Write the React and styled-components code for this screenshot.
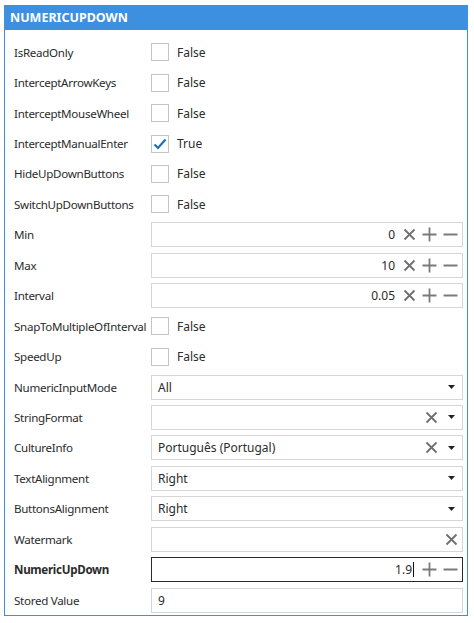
import React from 'react'
import styled, { createGlobalStyle } from 'styled-components';

const GlobalStyle = createGlobalStyle`
    body {
        margin: 0;
        background: #fff;
        font-family: "Noto Sans", "Open Sans", sans-serif;
    }
`;

const ClearIcon = () => (
    <svg width="13" height="13" viewBox="0 0 13 13">
        <path d="M1.5 1.5 L11.5 11.5 M11.5 1.5 L1.5 11.5" stroke="#6f6f6f" strokeWidth="1.8" fill="none"/>
    </svg>
);

const PlusIcon = () => (
    <svg width="15" height="15" viewBox="0 0 15 15">
        <path d="M7.5 0.5 V14.5 M0.5 7.5 H14.5" stroke="#7a7a7a" strokeWidth="1.8" fill="none"/>
    </svg>
);

const MinusIcon = () => (
    <svg width="15" height="15" viewBox="0 0 15 15">
        <path d="M0.5 7.5 H14.5" stroke="#7a7a7a" strokeWidth="2" fill="none"/>
    </svg>
);

const ArrowIcon = () => (
    <svg width="7" height="4" viewBox="0 0 7 4">
        <path d="M0 0 H7 L3.5 4 Z" fill="#222"/>
    </svg>
);

const CheckIcon = () => (
    <svg width="14" height="12" viewBox="0 0 14 12">
        <path d="M1.5 6.5 L5 10 L12.5 1.5" stroke="#1f6fb8" strokeWidth="2.2" fill="none"/>
    </svg>
);

const rows = [
    { label: 'IsReadOnly', type: 'check', value: false },
    { label: 'InterceptArrowKeys', type: 'check', value: false },
    { label: 'InterceptMouseWheel', type: 'check', value: false },
    { label: 'InterceptManualEnter', type: 'check', value: true },
    { label: 'HideUpDownButtons', type: 'check', value: false },
    { label: 'SwitchUpDownButtons', type: 'check', value: false },
    { label: 'Min', type: 'numeric', value: '0', clear: true },
    { label: 'Max', type: 'numeric', value: '10', clear: true },
    { label: 'Interval', type: 'numeric', value: '0.05', clear: true },
    { label: 'SnapToMultipleOfInterval', type: 'check', value: false },
    { label: 'SpeedUp', type: 'check', value: false },
    { label: 'NumericInputMode', type: 'combo', value: 'All' },
    { label: 'StringFormat', type: 'combo', value: '', clear: true },
    { label: 'CultureInfo', type: 'combo', value: 'Português (Portugal)', clear: true },
    { label: 'TextAlignment', type: 'combo', value: 'Right' },
    { label: 'ButtonsAlignment', type: 'combo', value: 'Right' },
    { label: 'Watermark', type: 'text', value: '', clear: true },
    { label: 'NumericUpDown', type: 'numeric', value: '1.9', bold: true, focused: true },
    { label: 'Stored Value', type: 'text', value: '9' },
];

const Editor = ({ row }) => {
    if (row.type === 'check') {
        return (
            <CheckRow>
                <CheckBox>{row.value && <CheckIcon/>}</CheckBox>
                <span>{row.value ? 'True' : 'False'}</span>
            </CheckRow>
        );
    }
    if (row.type === 'numeric') {
        return (
            <InputBox focused={row.focused}>
                <Value align="right">
                    {row.value}
                    {row.focused && <Caret/>}
                </Value>
                <Buttons>
                    {row.clear && <ClearIcon/>}
                    <PlusIcon/>
                    <MinusIcon/>
                </Buttons>
            </InputBox>
        );
    }
    if (row.type === 'combo') {
        return (
            <InputBox>
                <Value>{row.value}</Value>
                <Buttons>
                    {row.clear && <ClearIcon/>}
                    <ArrowSlot><ArrowIcon/></ArrowSlot>
                </Buttons>
            </InputBox>
        );
    }
    return (
        <InputBox>
            <Value>{row.value}</Value>
            {row.clear && <Buttons><ClearIcon/></Buttons>}
        </InputBox>
    );
};

export default function App() {
    return (
        <>
            <GlobalStyle/>
            <Panel>
                <Header>NUMERICUPDOWN</Header>
                <Grid>
                    {rows.map(row => (
                        <React.Fragment key={row.label}>
                            <Label bold={row.bold}>{row.label}</Label>
                            <Cell><Editor row={row}/></Cell>
                        </React.Fragment>
                    ))}
                </Grid>
            </Panel>
        </>
    );
}

const Panel = styled.div`
    margin: 5px 0 0 4px;
    width: 462px;
    border: 1px solid #3d8fe0;
    border-top: none;
    box-sizing: content-box;
`;

const Header = styled.div`
    height: 25px;
    background: #3d8fe0;
    color: #fff;
    font-weight: 700;
    font-size: 12.5px;
    line-height: 25px;
    padding-left: 5px;
`;

const Grid = styled.div`
    display: grid;
    grid-template-columns: 137px 1fr;
    grid-auto-rows: 30.45px;
    padding: 7px 4px 0 9px;
`;

const Label = styled.div`
    display: flex;
    align-items: center;
    font-size: 11.6px;
    color: #2b2b2b;
    font-weight: ${p => p.bold ? 700 : 400};
    letter-spacing: -0.3px;
    white-space: nowrap;
`;

const Cell = styled.div`
    display: flex;
    align-items: center;
`;

const CheckRow = styled.div`
    display: flex;
    align-items: center;
    gap: 8px;
    font-size: 12px;
    color: #2b2b2b;
`;

const CheckBox = styled.div`
    width: 16px;
    height: 16px;
    border: 1px solid #c4c4c4;
    display: flex;
    align-items: center;
    justify-content: center;
    background: #fff;
`;

const InputBox = styled.div`
    flex: 1;
    height: 25px;
    box-sizing: border-box;
    border: 1px solid ${p => p.focused ? '#2a2a2a' : '#d6d6d6'};
    display: flex;
    align-items: center;
    padding: 0 4px 0 6px;
    font-size: 12px;
    color: #2b2b2b;
`;

const Value = styled.div`
    flex: 1;
    display: flex;
    align-items: center;
    justify-content: ${p => p.align === 'right' ? 'flex-end' : 'flex-start'};
    white-space: nowrap;
    padding-right: 4px;
`;

const Caret = styled.span`
    display: inline-block;
    width: 1px;
    height: 15px;
    background: #111;
    margin-left: 1px;
`;

const Buttons = styled.div`
    display: flex;
    align-items: center;
    gap: 6px;
    padding-left: 4px;
`;

const ArrowSlot = styled.div`
    width: 14px;
    display: flex;
    justify-content: center;
`;
